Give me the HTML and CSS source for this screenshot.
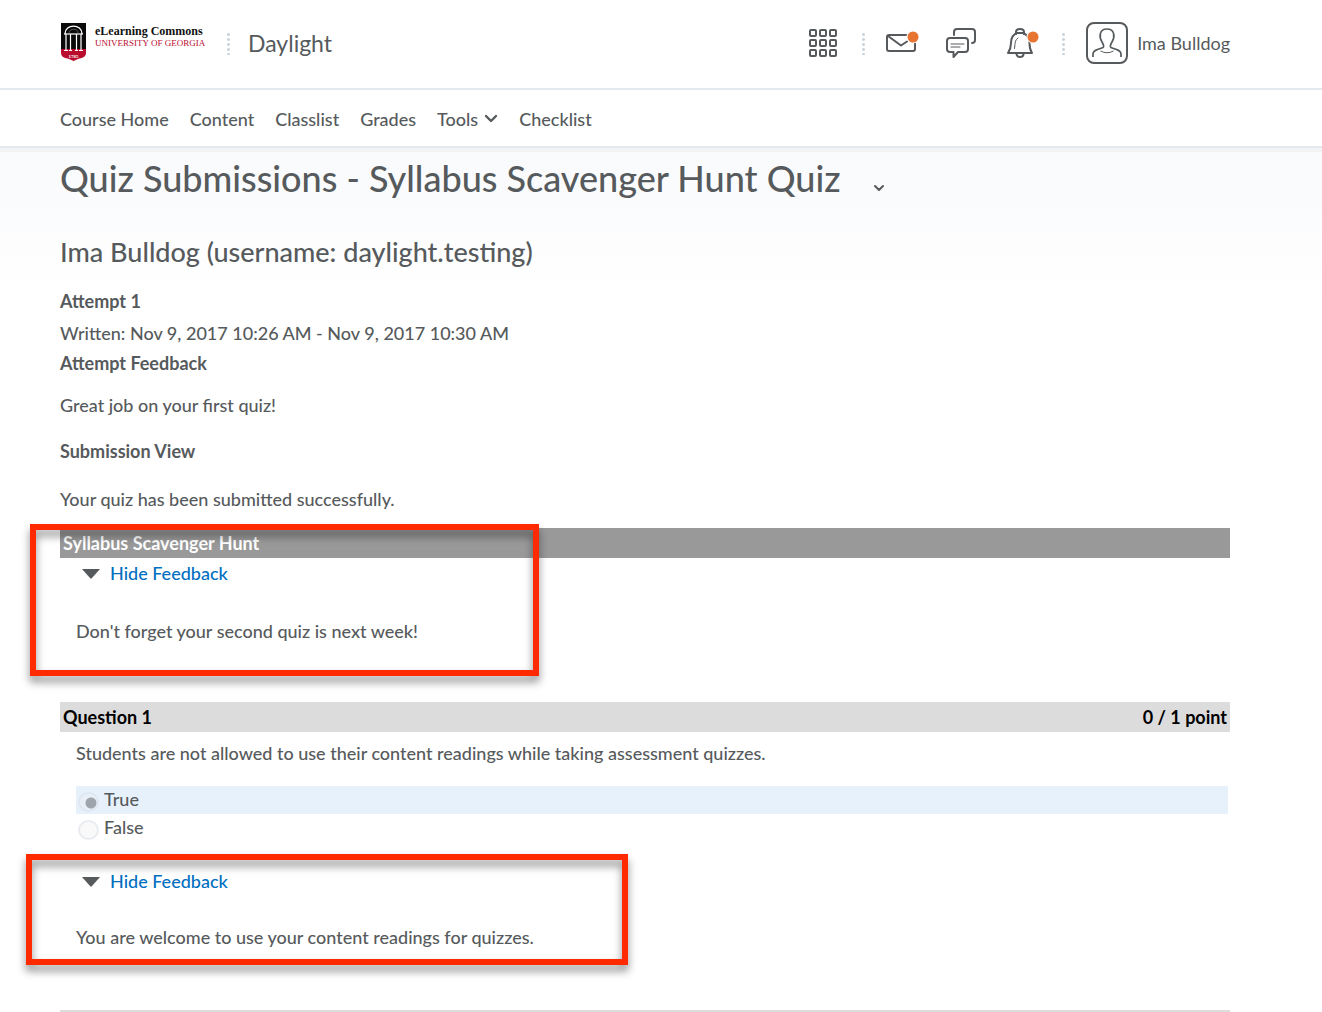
FILE: index.html
```html
<!DOCTYPE html>
<html lang="en">
<head>
<meta charset="utf-8">
<meta name="viewport" content="width=device-width, initial-scale=1">
<title>Quiz Submissions - Syllabus Scavenger Hunt Quiz</title>
<link rel="stylesheet" href="styles.css">
</head>
<body>
<header class="site-header">
  <div class="brand">
    <a class="logo" href="#" aria-label="eLearning Commons home">
      <svg class="crest" width="28" height="40" viewBox="0 0 28 40" aria-hidden="true">
        <path d="M1 1h25v27H1z" fill="#0b0a0b"/>
        <path d="M1 27h25v4c0 4-4 5-8 6l-4.500 2-4.500-2c-4-1-8-2-8-6z" fill="#ba0c2f"/>
        <g fill="none" stroke="#fff">
          <path d="M5 12C5 1.500 22 1.500 22 12" stroke-width="1.300"/>
          <path d="M9 11c0-5 9-5 9 0" stroke-width=".6" opacity=".5"/>
          <path d="M4 12h19" stroke-width="1.200"/>
          <path d="M6 12v17M10.500 12v17M16.500 12v17M21 12v17" stroke-width="1.200"/>
          <path d="M4 28.500h4M9 28.500h3M15 28.500h3M19 28.500h4" stroke-width="1"/>
        </g>
        <text class="crest-year" x="13.500" y="36" text-anchor="middle">1785</text>
      </svg>
      <span class="logo-text"><span class="logo-name">eLearning Commons</span><span class="logo-school">UNIVERSITY OF GEORGIA</span></span>
    </a>
    <span class="dots"></span>
    <a class="course" href="#">Daylight</a>
  </div>
  <div class="tools">
    <button class="icon-button" type="button" aria-label="Select a course">
      <svg width="30" height="30" viewBox="0 0 30 30" fill="none" stroke="#565a5c" stroke-width="2">
        <rect x="2" y="2" width="6" height="6" rx="1"/><rect x="12" y="2" width="6" height="6" rx="1"/><rect x="22" y="2" width="6" height="6" rx="1"/>
        <rect x="2" y="12" width="6" height="6" rx="1"/><rect x="12" y="12" width="6" height="6" rx="1"/><rect x="22" y="12" width="6" height="6" rx="1"/>
        <rect x="2" y="22" width="6" height="6" rx="1"/><rect x="12" y="22" width="6" height="6" rx="1"/><rect x="22" y="22" width="6" height="6" rx="1"/>
      </svg>
    </button>
    <span class="dots"></span>
    <div class="alerts">
      <button class="icon-button" type="button" aria-label="Message alerts">
        <svg width="34" height="32" viewBox="0 0 34 32" fill="none" stroke="#565a5c" stroke-width="2" stroke-linecap="round" stroke-linejoin="round">
          <rect x="2" y="8" width="28" height="16" rx="2"/><path d="M3 9l13 9.500L22 14.500"/>
          <circle cx="28" cy="10" r="6.500" fill="#fff" stroke="none"/><circle cx="28" cy="10" r="5.500" fill="#e87431" stroke="none"/>
        </svg>
      </button>
      <button class="icon-button" type="button" aria-label="Subscription alerts">
        <svg width="34" height="32" viewBox="0 0 34 32" fill="none" stroke="#565a5c" stroke-width="2" stroke-linecap="round" stroke-linejoin="round">
          <path d="M9 8V5q0-3 3-3h15q3 0 3 3v8q0 3-3 3"/>
          <path d="M5 11h15q3 0 3 3v8q0 3-3 3h-7l-4.500 5v-5H5q-3 0-3-3v-8q0-3 3-3z"/>
          <path d="M6 17h13M6 20h9" stroke-width="1"/>
        </svg>
      </button>
      <button class="icon-button" type="button" aria-label="Update alerts">
        <svg width="34" height="32" viewBox="0 0 34 32" fill="none" stroke="#565a5c" stroke-width="2" stroke-linecap="round" stroke-linejoin="round">
          <path d="M11 7V5q0-3 4-3t4 3v2"/>
          <path d="M12 6h6c5 2 6.500 6 6.500 10 0 5 .5 7 2.500 10H3c2-3 3-5 3-10C6 12 7 8 12 6z"/>
          <path d="M13 11c-2.500 2-3 4-3 6.500l-.5 4" stroke-width="1"/>
          <path d="M11.500 27q0 3 3.500 3t3.500-3"/>
          <circle cx="28" cy="10" r="6.500" fill="#fff" stroke="none"/><circle cx="28" cy="10" r="5.500" fill="#e87431" stroke="none"/>
        </svg>
      </button>
    </div>
    <span class="dots"></span>
    <button class="profile" type="button">
      <svg width="42" height="42" viewBox="0 0 42 42" fill="none" stroke="#565a5c" aria-hidden="true">
        <rect x="1" y="1" width="40" height="40" rx="7" stroke-width="2"/>
        <path d="M7 35v-3c0-4 4-4 10-6.500 1.500-1 .5-3-1-5.500-3-5-3-13 5-13s8 8 5 13c-1.500 2.500-2.500 4.500-1 5.500 6 2.500 10 2.500 10 6.500v3" stroke-width="1.700"/>
        <path d="M14.500 29q6.500 3.500 13 0" stroke-width="1"/>
      </svg>
      <span>Ima Bulldog</span>
    </button>
  </div>
</header>
<nav class="course-nav" aria-label="Course">
  <a href="#">Course Home</a>
  <a href="#">Content</a>
  <a href="#">Classlist</a>
  <a href="#">Grades</a>
  <button class="nav-menu" type="button">Tools
    <svg width="14" height="10" viewBox="0 0 14 10" fill="none" stroke="#565a5c" stroke-width="2.400" stroke-linecap="round" stroke-linejoin="round" aria-hidden="true"><path d="M2 2l5 5 5-5"/></svg>
  </button>
  <a href="#">Checklist</a>
</nav>
<main class="page">
  <div class="title-row">
    <h1>Quiz Submissions - Syllabus Scavenger Hunt Quiz</h1>
    <button class="icon-button" type="button" aria-label="Quiz actions">
      <svg width="14" height="10" viewBox="0 0 14 10" fill="none" stroke="#565a5c" stroke-width="2" stroke-linecap="round" stroke-linejoin="round"><path d="M3 3l4 4 4-4"/></svg>
    </button>
  </div>
  <h2>Ima Bulldog (username: daylight.testing)</h2>
  <h3>Attempt 1</h3>
  <p class="written">Written: Nov 9, 2017 10:26 AM - Nov 9, 2017 10:30 AM</p>
  <h3>Attempt Feedback</h3>
  <p class="comment">Great job on your first quiz!</p>
  <h3>Submission View</h3>
  <p class="status">Your quiz has been submitted successfully.</p>

  <section class="quiz-section highlight">
    <h3 class="bar bar-section">Syllabus Scavenger Hunt</h3>
    <button class="toggle" type="button">
      <svg width="18" height="12" viewBox="0 0 18 12" aria-hidden="true"><path d="M0 2h18l-8 9q-1 1-2 0z" fill="#565a5c"/></svg>
      Hide Feedback
    </button>
    <p class="feedback-text">Don't forget your second quiz is next week!</p>
  </section>

  <section class="question">
    <h3 class="bar bar-question"><span>Question 1</span><span>0 / 1 point</span></h3>
    <fieldset class="answers" disabled>
      <legend>Students are not allowed to use their content readings while taking assessment quizzes.</legend>
      <label class="answer selected"><input type="radio" name="q1" checked>True</label>
      <label class="answer"><input type="radio" name="q1">False</label>
    </fieldset>
    <div class="question-feedback highlight">
      <button class="toggle" type="button">
        <svg width="18" height="12" viewBox="0 0 18 12" aria-hidden="true"><path d="M0 2h18l-8 9q-1 1-2 0z" fill="#565a5c"/></svg>
        Hide Feedback
      </button>
      <p class="feedback-text">You are welcome to use your content readings for quizzes.</p>
    </div>
  </section>
</main>
</body>
</html>
```
FILE: styles.css
```css
*,
*::after {
  box-sizing: border-box;
}

body {
  margin: 0;
  background: #fff;
  color: #565a5c;
  font: 500 18px/30px Lato, "Liberation Sans", sans-serif;
}

h1, h2, h3, p {
  margin: 0;
}

h3 {
  font-size: 18px;
  font-weight: 700;
}

a {
  color: inherit;
  text-decoration: none;
}

button {
  padding: 0;
  border: 0;
  background: none;
  color: inherit;
  font: inherit;
  cursor: pointer;
}

svg {
  display: block;
  flex: none;
}

/* Header */

.site-header {
  display: flex;
  justify-content: space-between;
  align-items: center;
  height: 90px;
  padding: 0 92px 2px 60px;
  border-bottom: 2px solid #e3e9ed;
  font-weight: 400;
}

.brand,
.logo,
.tools,
.alerts,
.profile {
  display: flex;
  align-items: center;
}

.brand {
  gap: 18px;
}

.logo {
  gap: 7px;
  padding-bottom: 2px;
}

.crest-year {
  fill: #fff;
  font: 700 5px "Liberation Serif", serif;
}

.logo-text {
  display: flex;
  flex-direction: column;
  width: 114px;
  padding-bottom: 10px;
  font-family: "Liberation Serif", serif;
  line-height: 12px;
  white-space: nowrap;
}

.logo-name {
  color: #111;
  font-size: 12px;
  font-weight: 700;
}

.logo-school {
  color: #ba0c2f;
  font-size: 9px;
}

.dots {
  width: 3px;
  height: 23px;
  background: radial-gradient(circle, #cdd5dc 1px, transparent 2px) 0 0 / 3px 5px;
}

.course {
  font-size: 23px;
}

.tools {
  gap: 24px;
}

.alerts {
  gap: 26px;
  margin: 0 -1px 0 -4px;
}

.profile {
  gap: 9px;
  margin-left: -3px;
}

.course-nav {
  display: flex;
  gap: 21px;
  height: 58px;
  padding: 14px 60px 0;
  border-bottom: 2px solid #e3e9ed;
}

.nav-menu {
  display: flex;
  align-items: center;
  gap: 6px;
  height: 30px;
}

/* Page */

.page {
  padding: 8px 92px 0 60px;
  background: linear-gradient(#f1f3f5 4px, #f9fafc 4px, #fff 150px);
}

.title-row {
  display: flex;
  align-items: center;
  gap: 31px;
}

.title-row .icon-button {
  padding-top: 20px;
}

h1 {
  font-size: 36px;
  font-weight: 500;
  line-height: 44px;
}

h2 {
  margin: 34px 0 16px;
  font-size: 27px;
  font-weight: 500;
  line-height: 36px;
}

.written {
  margin-top: 2px;
}

.comment {
  margin: 12px 0 16px;
}

.status {
  margin: 18px 0 14px;
}

/* Annotated regions */

.highlight {
  position: relative;
}

.highlight::after {
  content: "";
  position: absolute;
  border: 6px solid #ff2a00;
  filter: drop-shadow(0 6px 4px rgb(0 0 0 / 45%));
  pointer-events: none;
}

.quiz-section {
  margin-bottom: 30px;
  padding-bottom: 26px;
}

.quiz-section::after {
  inset: -4px auto -4px -30px;
  width: 509px;
}

.question-feedback {
  margin-top: 12px;
  padding: 12px 0 13px;
}

.question-feedback::after {
  inset: 0 auto 0 -34px;
  width: 602px;
}

.bar {
  display: flex;
  justify-content: space-between;
  padding: 0 3px;
}

.bar-section {
  background: #999;
  color: #fff;
}

.bar-question {
  background: #dcdcdc;
  color: #000;
}

.toggle {
  display: flex;
  align-items: center;
  gap: 10px;
  margin-left: 22px;
  color: #006fbf;
}

.feedback-text {
  padding-left: 16px;
}

.quiz-section .feedback-text {
  margin-top: 28px;
}

.question-feedback .feedback-text {
  margin-top: 26px;
}

.question {
  padding-bottom: 45px;
  border-bottom: 2px solid #dcdcdc;
}

.answers {
  margin: 6px 2px 0 16px;
  padding: 0;
  border: 0;
}

.answers legend {
  padding: 0;
  margin-bottom: 18px;
}

.answer {
  display: flex;
  align-items: center;
  gap: 5px;
  height: 28px;
  padding: 0 0 2px 2px;
}

.selected {
  background: #e6f1fc;
}

.answer input {
  appearance: none;
  width: 21px;
  height: 20px;
  margin: 6px 0 0;
  border: 2px solid #e8ecf1;
  border-radius: 50%;
  background: #f9f9f9;
}

.answer input:checked {
  border-color: #dfe7f0;
  background: radial-gradient(circle at 11px 9px, #9ea5ad 5px, #e8eff7 6px);
}
```
